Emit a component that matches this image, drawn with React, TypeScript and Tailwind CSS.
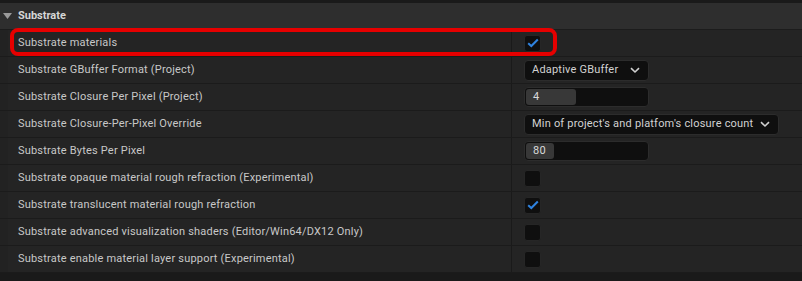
import React from "react";

type Row =
  | { label: string; kind: "check"; checked: boolean }
  | { label: string; kind: "combo"; value: string; width: string }
  | { label: string; kind: "num"; value: string; fill: number };

const rows: Row[] = [
  { label: "Substrate materials", kind: "check", checked: true },
  { label: "Substrate GBuffer Format (Project)", kind: "combo", value: "Adaptive GBuffer", width: "w-[125px]" },
  { label: "Substrate Closure Per Pixel (Project)", kind: "num", value: "4", fill: 50 },
  { label: "Substrate Closure-Per-Pixel Override", kind: "combo", value: "Min of project's and platfom's closure count", width: "w-[255px]" },
  { label: "Substrate Bytes Per Pixel", kind: "num", value: "80", fill: 28 },
  { label: "Substrate opaque material rough refraction (Experimental)", kind: "check", checked: false },
  { label: "Substrate translucent material rough refraction", kind: "check", checked: true },
  { label: "Substrate advanced visualization shaders (Editor/Win64/DX12 Only)", kind: "check", checked: false },
  { label: "Substrate enable material layer support (Experimental)", kind: "check", checked: false },
];

function Chevron() {
  return (
    <svg width="10" height="7" viewBox="0 0 10 7" className="shrink-0">
      <path d="M1 1.2 L5 5 L9 1.2" fill="none" stroke="#d0d0d0" strokeWidth="1.6" />
    </svg>
  );
}

function Check({ checked }: { checked: boolean }) {
  return (
    <div className="w-[17px] h-[17px] rounded-[3px] bg-[#0f0f0f] border border-[#262626] flex items-center justify-center">
      {checked && (
        <svg width="12" height="10" viewBox="0 0 12 10">
          <path d="M1.2 5.2 L4.3 8 L10.8 1.5" fill="none" stroke="#2f83e0" strokeWidth="2" />
        </svg>
      )}
    </div>
  );
}

function Value({ row }: { row: Row }) {
  if (row.kind === "check") return <Check checked={row.checked} />;
  if (row.kind === "combo")
    return (
      <div className={`${row.width} h-[21px] rounded-[4px] bg-[#0f0f0f] border border-[#2c2c2c] flex items-center justify-between pl-[7px] pr-[8px] text-[#d2d2d2]`}>
        <span className="whitespace-nowrap">{row.value}</span>
        <Chevron />
      </div>
    );
  return (
    <div className="w-[125px] h-[20px] rounded-[4px] bg-[#0f0f0f] border border-[#2c2c2c] p-[1px] flex">
      <div
        className="h-full rounded-[3px] bg-[#383838] flex items-center pl-[7px] text-[#d8d8d8]"
        style={{ width: row.fill }}
      >
        {row.value}
      </div>
    </div>
  );
}

export default function App() {
  return (
    <div
      className="w-[802px] h-[281px] bg-[#1a1a1a] overflow-hidden text-[11px] tracking-[0.2px] relative"
      style={{ fontFamily: "Roboto, 'Noto Sans', sans-serif" }}
    >
      <div className="h-[3px]" />
      <div className="h-[27px] bg-[#2e2e2e] flex items-center border-b border-[#1c1c1c]">
        <svg width="9" height="6" viewBox="0 0 9 6" className="ml-[3px] mr-[6px]">
          <path d="M0 0 L9 0 L4.5 6 Z" fill="#9a9a9a" />
        </svg>
        <span className="font-bold text-[#d6d6d6] tracking-normal">Substrate</span>
      </div>
      <div className="flex flex-col">
        {rows.map((r, i) => (
          <div key={i} className="h-[27px] flex bg-[#242424] border-b border-[#1b1b1b]">
            <div className="w-[8px] bg-[#222222]" />
            <div className="w-[503px] flex items-center pl-[10px] text-[#c8c8c8] whitespace-nowrap">
              {r.label}
            </div>
            <div className="w-px bg-[#1a1a1a]" />
            <div className="flex-1 flex items-center pl-[12px]">
              <Value row={r} />
            </div>
          </div>
        ))}
      </div>
      <div className="absolute left-[10px] top-[28px] w-[547px] h-[28px] rounded-[8px] border-[4px] border-[#e60000]" />
    </div>
  );
}
